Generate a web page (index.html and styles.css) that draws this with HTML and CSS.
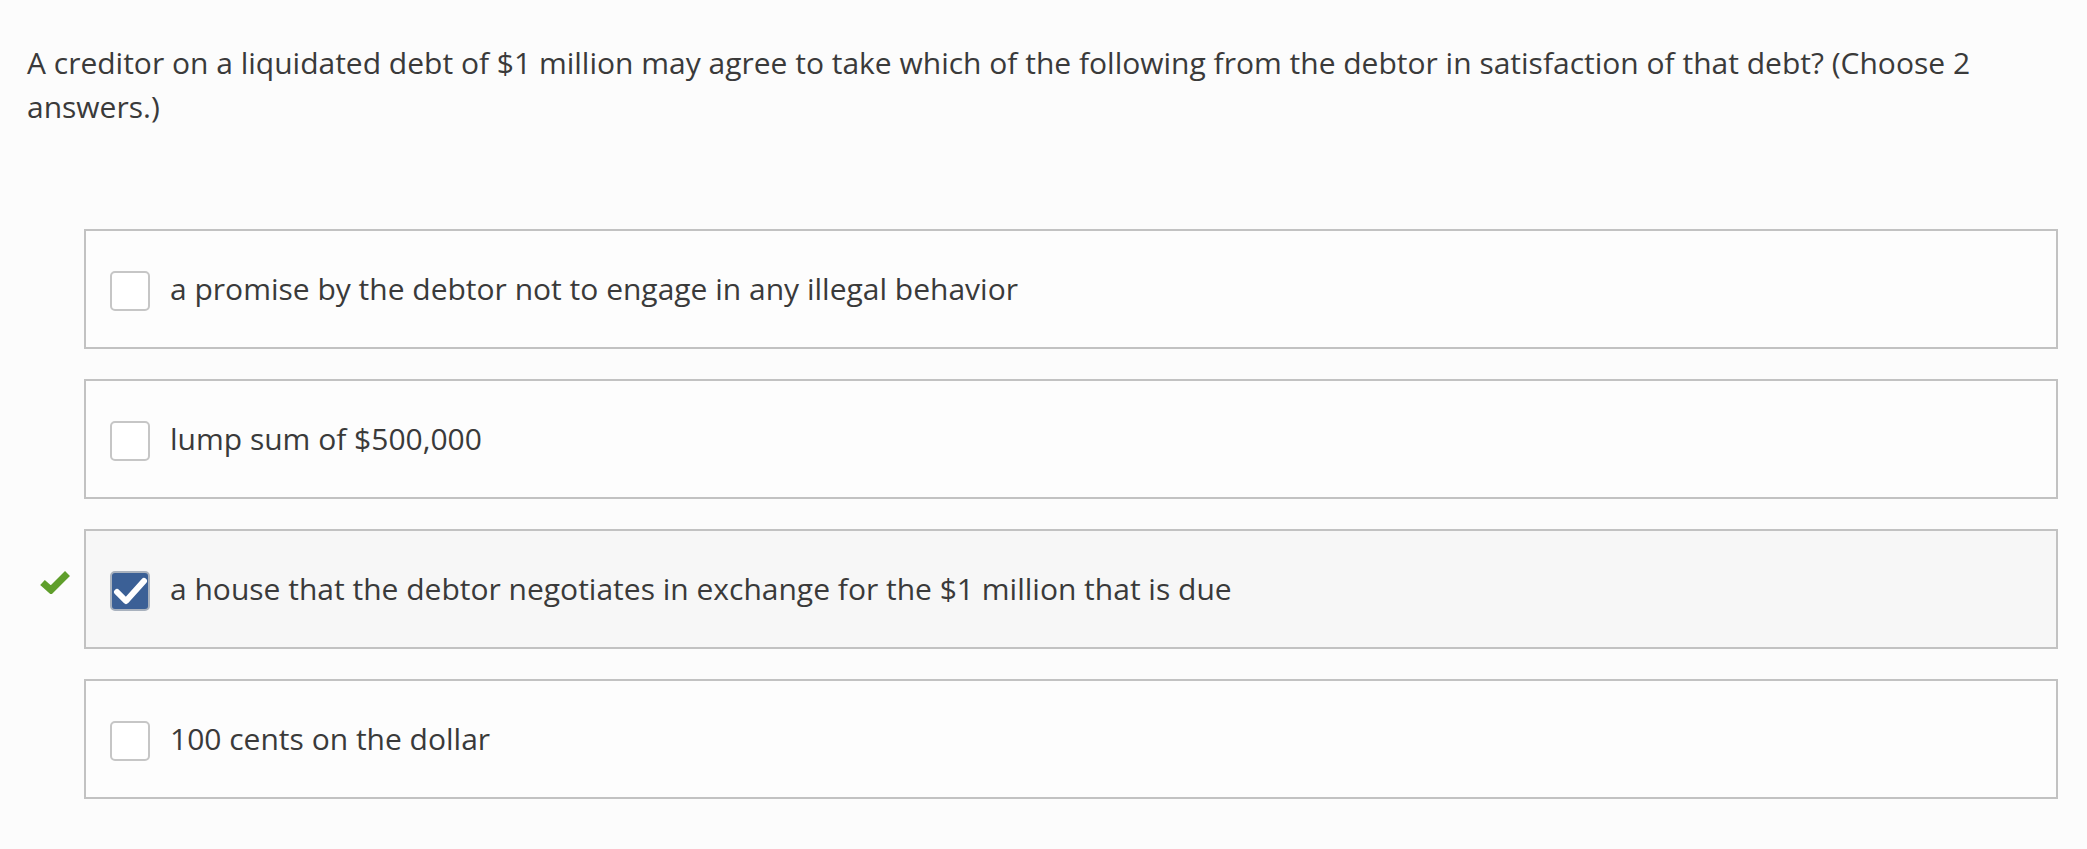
FILE: index.html
```html
<!DOCTYPE html>
<html lang="en">
<head>
  <meta charset="UTF-8" />
  <title>Question</title>
  <link rel="stylesheet" href="styles.css">
</head>
<body>

<div class="question">
  <p class="prompt">A creditor on a liquidated debt of $1 million may agree to take which of the following from the debtor in satisfaction of that debt? (Choose 2 answers.)</p>

  <div class="answers">
    <div class="answer-row">
      <div class="mark"></div>
      <label class="option">
        <span class="box"></span>
        <span class="text">a promise by the debtor not to engage in any illegal behavior</span>
      </label>
    </div>

    <div class="answer-row">
      <div class="mark"></div>
      <label class="option">
        <span class="box"></span>
        <span class="text">lump sum of $500,000</span>
      </label>
    </div>

    <div class="answer-row">
      <div class="mark">
        <svg class="correct" viewBox="0 0 30 24" width="30" height="24">
          <path d="M2.5 12.5 L11 20 L27.5 3.5" fill="none" stroke="#5f9e2b" stroke-width="7" />
        </svg>
      </div>
      <label class="option selected">
        <span class="box checked">
          <svg viewBox="0 0 36 36" width="36" height="36">
            <path d="M5 19 L14 28 L32 8" fill="none" stroke="#fff" stroke-width="6" stroke-linecap="round" stroke-linejoin="round" />
          </svg>
        </span>
        <span class="text">a house that the debtor negotiates in exchange for the $1 million that is due</span>
      </label>
    </div>

    <div class="answer-row">
      <div class="mark"></div>
      <label class="option">
        <span class="box"></span>
        <span class="text">100 cents on the dollar</span>
      </label>
    </div>
  </div>
</div>

</body>
</html>
```

FILE: styles.css
```css
* { box-sizing: border-box; }
body {
  margin: 0;
  background-color: #fcfcfc;
  font-family: "Open Sans", Arial, sans-serif;
  color: #3a3a3a;
}
.question {
  padding: 41px 29px 0 27px;
}
.prompt {
  margin: 0;
  font-size: 30px;
  line-height: 44px;
}
.answers {
  margin-top: 100px;
  display: flex;
  flex-direction: column;
  gap: 30px;
}
.answer-row {
  display: flex;
  align-items: center;
  margin-left: -27px;
}
.mark {
  width: 84px;
  flex-shrink: 0;
  display: flex;
  padding-left: 40px;
  padding-bottom: 14px;
}
.option {
  flex: 1;
  height: 120px;
  display: flex;
  align-items: center;
  gap: 20px;
  padding: 0 24px;
  background-color: #fdfdfd;
  border: 2px solid #c2c2c2;
  font-size: 30px;
  line-height: 44px;
}
.option.selected {
  background-color: #f7f7f7;
}
.box {
  width: 40px;
  height: 40px;
  flex-shrink: 0;
  margin-top: 4px;
  border: 2px solid #c6c6c6;
  border-radius: 5px;
  background-color: #fff;
  display: flex;
  align-items: center;
  justify-content: center;
}
.box.checked {
  background-color: #3b6096;
  border-color: #a9b2be;
}
```
